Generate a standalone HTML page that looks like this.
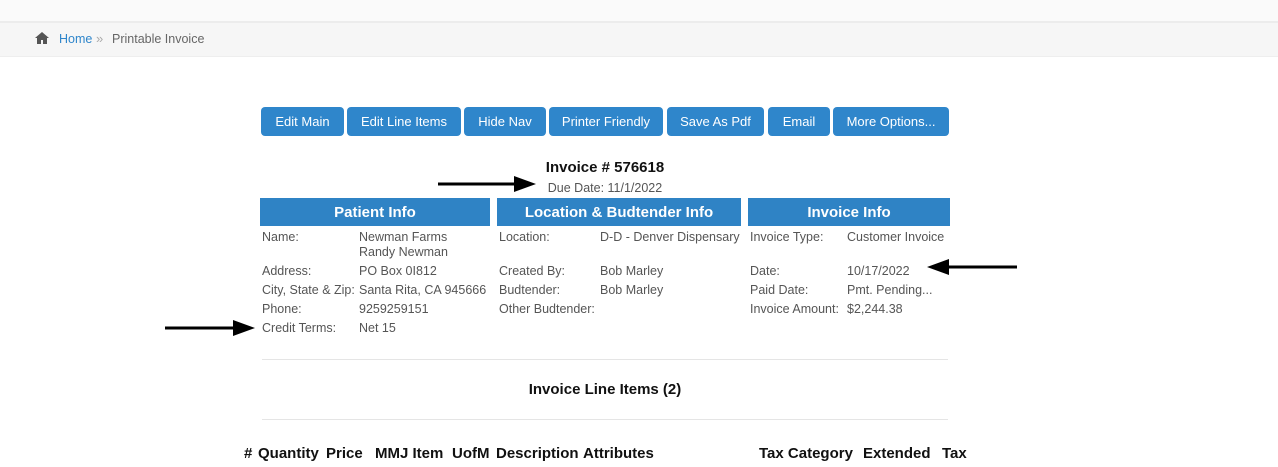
<!DOCTYPE html><html><head><style>
body{margin:0;width:1278px;height:467px;background:#fff;font-family:"Liberation Sans",sans-serif;position:relative;overflow:hidden}
.a{position:absolute;white-space:nowrap}
.btn{position:absolute;top:107px;height:29px;background:#2f86cb;color:#fff;border-radius:4px;font-size:13px;line-height:29px;text-align:center}
.hd{position:absolute;top:198px;height:28px;background:#2f83c5;color:#fff;font-weight:bold;font-size:15px;line-height:30px;text-align:center}
.t{position:absolute;font-size:12.5px;color:#555;white-space:nowrap}
.th{position:absolute;top:445px;font-size:15px;font-weight:bold;color:#111}
</style></head><body>
<div class="a" style="left:0;top:0;width:1278px;height:21px;background:#fafafa"></div>
<div class="a" style="left:0;top:21px;width:1278px;height:2px;background:#ececec"></div>
<div class="a" style="left:0;top:23px;width:1278px;height:33px;background:#f6f6f6;border-bottom:1px solid #eee"></div>
<svg class="a" style="left:35px;top:32px" width="14" height="12" viewBox="0 0 14 12"><path d="M7 0L0 6h2v6h4V8h2v4h4V6h2z" fill="#555"/></svg>
<div class="a" style="left:59px;top:32px;font-size:12.5px;color:#2f86cb">Home</div>
<div class="a" style="left:96px;top:31px;font-size:13px;color:#aaa">»</div>
<div class="a" style="left:112px;top:32px;font-size:12.5px;color:#666">Printable Invoice</div>
<div class="btn" style="left:261px;width:83px">Edit Main</div>
<div class="btn" style="left:347px;width:114px">Edit Line Items</div>
<div class="btn" style="left:464px;width:82px">Hide Nav</div>
<div class="btn" style="left:549px;width:114px">Printer Friendly</div>
<div class="btn" style="left:667px;width:97px">Save As Pdf</div>
<div class="btn" style="left:768px;width:62px">Email</div>
<div class="btn" style="left:833px;width:116px">More Options...</div>
<div class="a" style="left:0;width:1210px;top:159px;text-align:center;font-weight:bold;font-size:15px;color:#111">Invoice # 576618</div>
<div class="a" style="left:0;width:1210px;top:181px;text-align:center;font-size:12.5px;color:#555">Due Date: 11/1/2022</div>
<svg class="a" style="left:438px;top:174px" width="100" height="20"><path d="M0 10H78" stroke="#000" stroke-width="3"/><path d="M76 2L98 10L76 18z"/></svg>
<svg class="a" style="left:925px;top:257px" width="92" height="20"><path d="M22 10H92" stroke="#000" stroke-width="3"/><path d="M24 2L2 10L24 18z"/></svg>
<svg class="a" style="left:165px;top:318px" width="92" height="20"><path d="M0 10H70" stroke="#000" stroke-width="3"/><path d="M68 2L90 10L68 18z"/></svg>
<div class="hd" style="left:260px;width:230px">Patient Info</div>
<div class="hd" style="left:497px;width:244px">Location &amp; Budtender Info</div>
<div class="hd" style="left:748px;width:202px">Invoice Info</div>
<div class="t" style="left:262px;top:230px">Name:</div><div class="t" style="left:359px;top:230px">Newman Farms</div>
<div class="t" style="left:359px;top:245px">Randy Newman</div>
<div class="t" style="left:262px;top:264px">Address:</div><div class="t" style="left:359px;top:264px">PO Box 0I812</div>
<div class="t" style="left:262px;top:283px">City, State &amp; Zip:</div><div class="t" style="left:359px;top:283px">Santa Rita, CA 945666</div>
<div class="t" style="left:262px;top:302px">Phone:</div><div class="t" style="left:359px;top:302px">9259259151</div>
<div class="t" style="left:262px;top:321px">Credit Terms:</div><div class="t" style="left:359px;top:321px">Net 15</div>
<div class="t" style="left:499px;top:230px">Location:</div><div class="t" style="left:600px;top:230px">D-D - Denver Dispensary</div>
<div class="t" style="left:499px;top:264px">Created By:</div><div class="t" style="left:600px;top:264px">Bob Marley</div>
<div class="t" style="left:499px;top:283px">Budtender:</div><div class="t" style="left:600px;top:283px">Bob Marley</div>
<div class="t" style="left:499px;top:302px">Other Budtender:</div>
<div class="t" style="left:750px;top:230px">Invoice Type:</div><div class="t" style="left:847px;top:230px">Customer Invoice</div>
<div class="t" style="left:750px;top:264px">Date:</div><div class="t" style="left:847px;top:264px">10/17/2022</div>
<div class="t" style="left:750px;top:283px">Paid Date:</div><div class="t" style="left:847px;top:283px">Pmt. Pending...</div>
<div class="t" style="left:750px;top:302px">Invoice Amount:</div><div class="t" style="left:847px;top:302px">$2,244.38</div>
<div class="a" style="left:262px;top:359px;width:686px;height:1px;background:#e5e5e5"></div>
<div class="a" style="left:0;width:1210px;top:381px;text-align:center;font-weight:bold;font-size:15px;color:#111">Invoice Line Items (2)</div>
<div class="a" style="left:262px;top:419px;width:686px;height:1px;background:#e5e5e5"></div>
<div class="th" style="left:244px">#</div>
<div class="th" style="left:258px">Quantity</div>
<div class="th" style="left:326px">Price</div>
<div class="th" style="left:375px">MMJ Item</div>
<div class="th" style="left:452px">UofM</div>
<div class="th" style="left:496px">Description</div>
<div class="th" style="left:583px">Attributes</div>
<div class="th" style="left:759px">Tax Category</div>
<div class="th" style="left:863px">Extended</div>
<div class="th" style="left:942px">Tax</div>
</body></html>
